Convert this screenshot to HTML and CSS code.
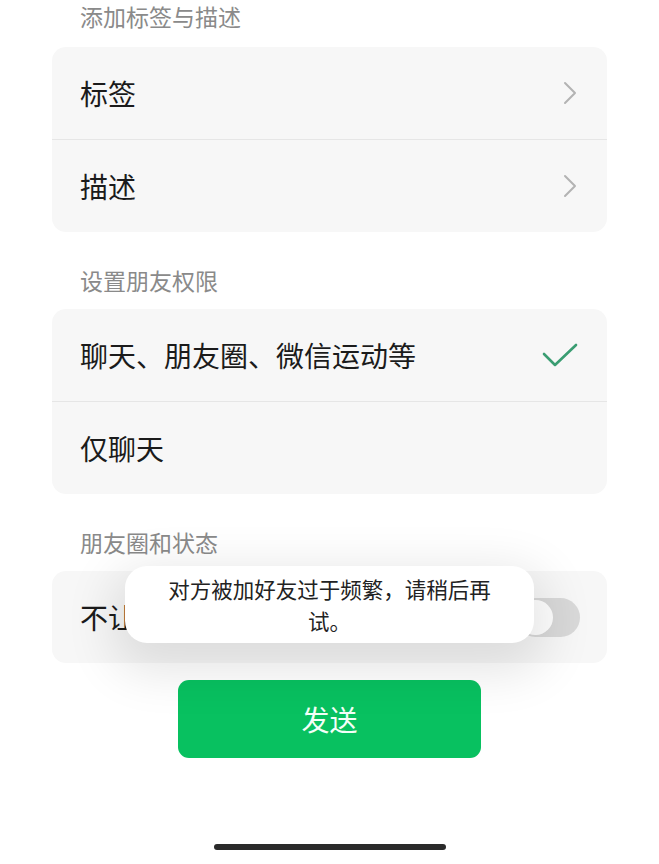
FILE: index.html
```html
<!DOCTYPE html>
<html lang="zh-CN">
<head>
<meta charset="utf-8">
<title>申请添加朋友</title>
<link rel="stylesheet" href="styles.css">
</head>
<body>
<div class="page">
  <div class="section-title first">添加标签与描述</div>
  <div class="card">
    <div class="row">
      <span class="row-text">标签</span>
      <svg class="chevron" width="14" height="24" viewBox="0 0 14 24"><path d="M2 2 L12 12 L2 22" fill="none" stroke="#b3b3b3" stroke-width="2" stroke-linecap="round" stroke-linejoin="round"/></svg>
    </div>
    <div class="row">
      <span class="row-text">描述</span>
      <svg class="chevron" width="14" height="24" viewBox="0 0 14 24"><path d="M2 2 L12 12 L2 22" fill="none" stroke="#b3b3b3" stroke-width="2" stroke-linecap="round" stroke-linejoin="round"/></svg>
    </div>
  </div>

  <div class="section-title">设置朋友权限</div>
  <div class="card">
    <div class="row">
      <span class="row-text">聊天、朋友圈、微信运动等</span>
      <svg class="check" width="36" height="25" viewBox="0 0 36 25"><path d="M2 11 L13 22 L34 2" fill="none" stroke="#3a9d72" stroke-width="2.6" stroke-linecap="round" stroke-linejoin="round"/></svg>
    </div>
    <div class="row">
      <span class="row-text">仅聊天</span>
    </div>
  </div>

  <div class="section-title">朋友圈和状态</div>
  <div class="card">
    <div class="row">
      <span class="row-text">不让他（她）看</span>
      <span class="switch"><span class="knob"></span></span>
    </div>
  </div>

  <div class="actions">
    <button class="send-btn">发送</button>
  </div>

  <div class="home-bar"></div>
</div>

<div class="toast">对方被加好友过于频繁，请稍后再试。</div>
</body>
</html>
```

FILE: styles.css
```css
html, body {
  margin: 0;
  padding: 0;
  background: #ffffff;
}

body {
  font-family: "Noto Sans CJK SC", "Noto Sans", sans-serif;
  color: #1b1b1b;
  position: relative;
  width: 659px;
  height: 864px;
  overflow: hidden;
}

.page {
  padding: 0 52px;
  display: flex;
  flex-direction: column;
}

.section-title {
  font-size: 23px;
  line-height: 32px;
  color: #8a8a8a;
  padding: 32px 0 13px 28px;
}

.section-title.first {
  padding-top: 0;
  padding-bottom: 15px;
}

.card {
  background: #f7f7f7;
  border-radius: 14px;
  overflow: hidden;
}

.row {
  height: 92px;
  display: flex;
  align-items: center;
  justify-content: space-between;
  padding: 0 30px 0 28px;
}

.row + .row {
  border-top: 1px solid #e6e6e6;
}

.row-text {
  font-size: 28px;
  line-height: 36px;
}

.chevron {
  display: block;
}

.check {
  display: block;
  margin-right: -1px;
}

.switch {
  width: 64px;
  height: 39px;
  border-radius: 20px;
  background: #d9d9d9;
  position: relative;
  margin-right: -3px;
  display: block;
}

.knob {
  position: absolute;
  left: 2px;
  top: 2px;
  width: 35px;
  height: 35px;
  border-radius: 50%;
  background: #ffffff;
}

.actions {
  display: flex;
  justify-content: center;
  margin-top: 17px;
}

.send-btn {
  width: 303px;
  height: 78px;
  border: none;
  border-radius: 11px;
  background: #08c160;
  color: #f4fff8;
  font-family: "Noto Sans CJK SC", sans-serif;
  font-size: 28px;
  padding: 0;
}

.home-bar {
  width: 232px;
  height: 6px;
  border-radius: 3px;
  background: #2a2a2a;
  margin: 86px auto 0;
}

.toast {
  position: absolute;
  top: 566px;
  left: 125px;
  width: 409px;
  box-sizing: border-box;
  padding: 7px 42px 6px;
  background: #ffffff;
  border-radius: 22px;
  box-shadow: 0 16px 50px 12px rgba(0, 0, 0, 0.11);
  font-size: 21.5px;
  line-height: 32px;
  color: #222222;
  text-align: center;
}
```
